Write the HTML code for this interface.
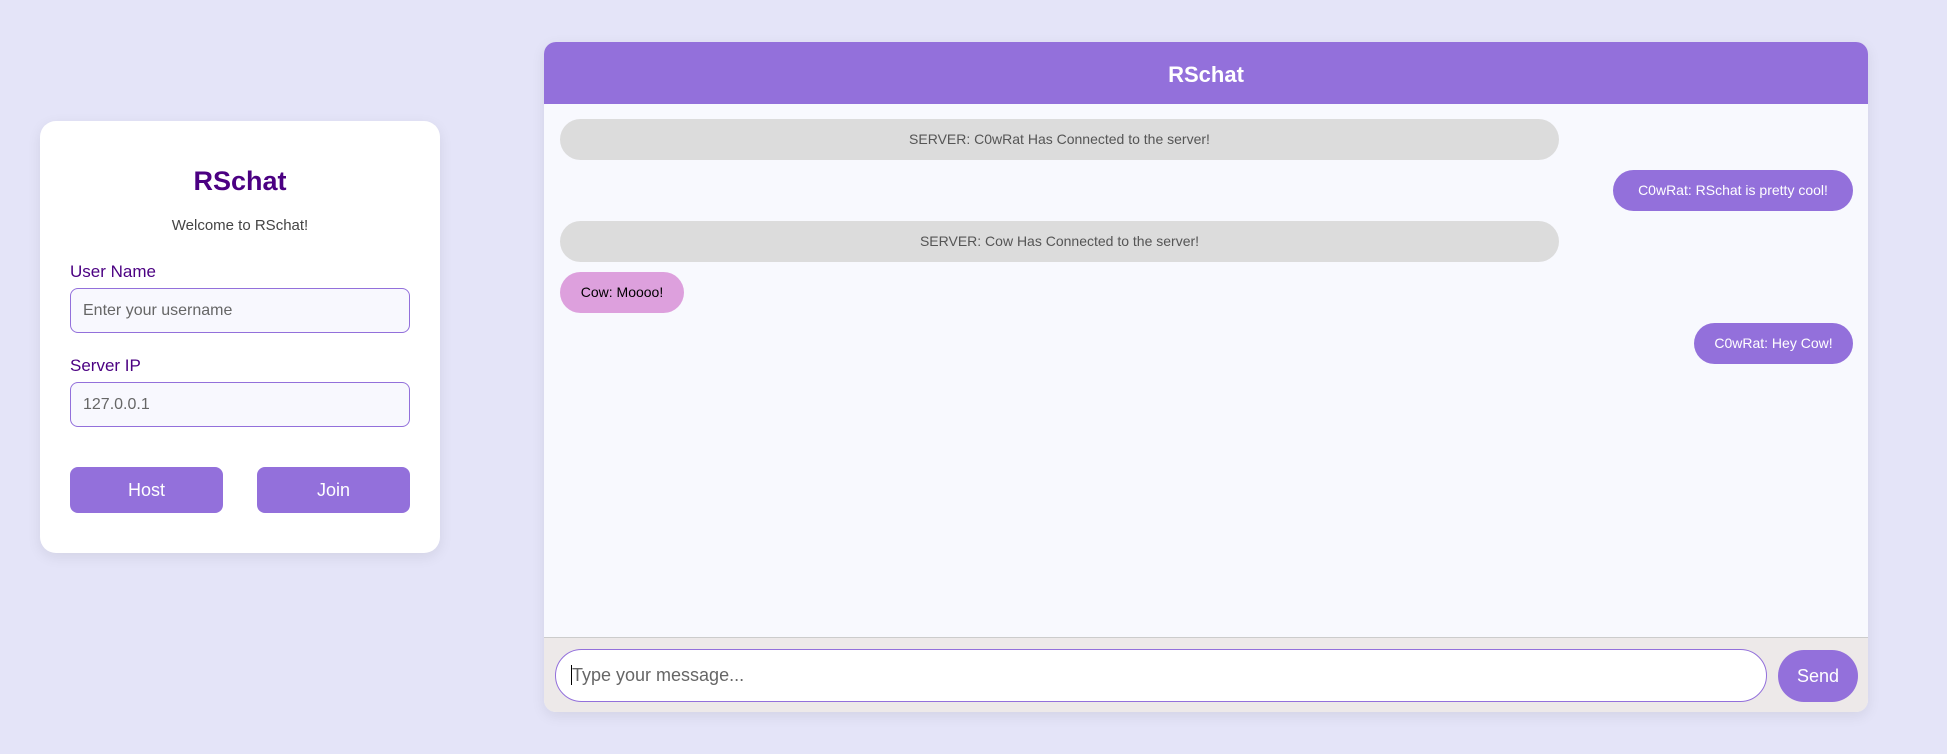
<!DOCTYPE html>
<html><head><meta charset="utf-8"><style>
*{box-sizing:border-box;margin:0;padding:0}
body{width:1947px;height:754px;background:#e4e4f8;font-family:"Liberation Sans",sans-serif;position:relative;overflow:hidden}
.card{position:absolute;left:40px;top:121px;width:400px;height:432px;background:#fff;border-radius:16px;box-shadow:0 4px 14px rgba(0,0,0,.08)}
.t{position:absolute;left:0;width:100%;text-align:center}
.lbl{position:absolute;left:30px;color:#4b0082;font-size:17px}
.inp{position:absolute;left:30px;width:340px;height:45px;border:1px solid #9370db;border-radius:8px;background:#f8f8fe;font-size:16px;color:#666;padding:13px 12px}
.btn{position:absolute;top:346px;width:153px;height:46px;background:#9370db;border-radius:8px;color:#fff;font-size:18px;text-align:center;line-height:46px}
.panel{position:absolute;left:544px;top:42px;width:1324px;height:670px;background:#f8f9fe;border-radius:12px;box-shadow:0 4px 14px rgba(0,0,0,.08);overflow:hidden}
.hdr{height:62px;background:#9370db;color:#fff;font-weight:bold;font-size:22px;text-align:center;line-height:65px}
.b{position:absolute;height:41px;border-radius:21px;font-size:14px;line-height:41px;text-align:center}
.srv{left:16px;width:999px;background:#dcdcdc;color:#555}
.me{background:#9370db;color:#fff;right:15px}
.ft{position:absolute;left:0;top:595px;width:100%;height:75px;background:#ede9e9;border-top:1px solid #ccc}
</style></head><body>
<div class="card">
<div class="t" style="top:45px;font-size:27px;font-weight:bold;color:#4b0082">RSchat</div>
<div class="t" style="top:96px;font-size:15px;color:#444">Welcome to RSchat!</div>
<div class="lbl" style="top:141px">User Name</div>
<div class="inp" style="top:167px">Enter your username</div>
<div class="lbl" style="top:235px">Server IP</div>
<div class="inp" style="top:261px">127.0.0.1</div>
<div class="btn" style="left:30px">Host</div>
<div class="btn" style="left:217px">Join</div>
</div>
<div class="panel">
<div class="hdr">RSchat</div>
<div class="b srv" style="top:77px">SERVER: C0wRat Has Connected to the server!</div>
<div class="b me" style="top:128px;width:240px">C0wRat: RSchat is pretty cool!</div>
<div class="b srv" style="top:179px">SERVER: Cow Has Connected to the server!</div>
<div class="b" style="top:230px;left:16px;width:124px;background:#dda0dd;color:#000">Cow: Moooo!</div>
<div class="b me" style="top:281px;width:159px">C0wRat: Hey Cow!</div>
<div class="ft">
<div style="position:absolute;left:11px;top:11px;width:1212px;height:53px;background:#fff;border:1px solid #9370db;border-radius:27px;font-size:18px;color:#666;padding:15px 15px"><span style="border-left:1px solid #000">Type your message...</span></div>
<div style="position:absolute;left:1234px;top:12px;width:80px;height:52px;background:#9370db;border-radius:26px;color:#fff;font-size:18px;text-align:center;line-height:52px">Send</div>
</div>
</div>
</body></html>
